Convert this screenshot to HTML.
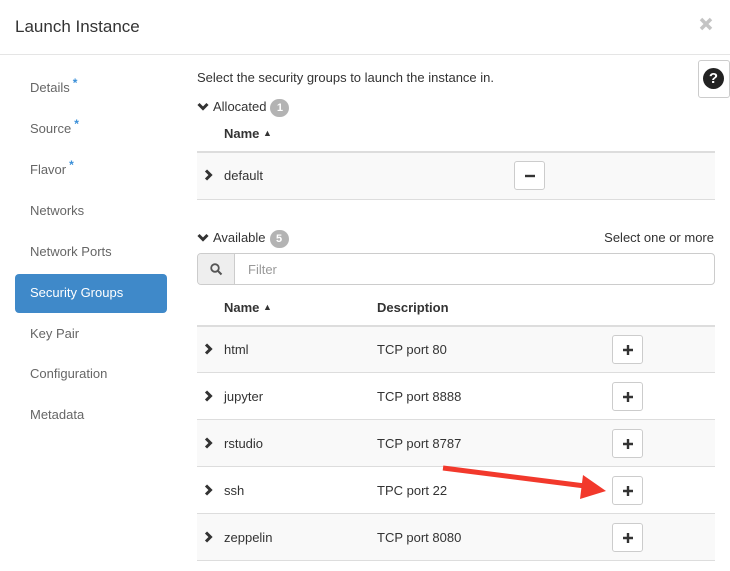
<!DOCTYPE html>
<html><head><style>
*{margin:0;padding:0;box-sizing:border-box}
body{width:730px;height:571px;background:#fff;font-family:"Liberation Sans",sans-serif;font-size:13px;color:#333;position:relative;overflow:hidden}
.a{position:absolute;white-space:nowrap}
.nav{position:absolute;left:30px;color:#666;font-size:13px}
.star{color:#3a8fd8;font-size:12px;position:relative;top:-5px;margin-left:3px;font-weight:bold}
.row{position:absolute;left:197px;width:518px;border-bottom:1px solid #ddd}
.btn{position:absolute;width:31px;height:29px;border:1px solid #ccc;border-radius:3px;background:#fff}
.btn svg{position:absolute;left:10px;top:9px}
.badge{display:inline-block;background:#b3b3b3;color:#fff;border-radius:9px;font-size:11px;font-weight:bold;width:19px;height:18px;line-height:18px;text-align:center;margin-left:4px;vertical-align:0px}
</style></head><body>
<div class="a" style="left:15px;top:17px;font-size:17px;color:#333">Launch Instance</div>
<svg class="a" style="left:699px;top:17px" width="14" height="14"><path d="M2 2 L12 12 M12 2 L2 12" stroke="#c4c4c4" stroke-width="3.5"/></svg>
<div class="a" style="left:0;top:54px;width:730px;height:1px;background:#e5e5e5"></div>

<div class="nav" style="top:80px">Details<span class="star">*</span></div>
<div class="nav" style="top:121px">Source<span class="star">*</span></div>
<div class="nav" style="top:162px">Flavor<span class="star">*</span></div>
<div class="nav" style="top:203px">Networks</div>
<div class="nav" style="top:244px">Network Ports</div>
<div class="a" style="left:15px;top:274px;width:152px;height:39px;background:#3f89c9;border-radius:4px"></div>
<div class="nav" style="top:285px;color:#fff">Security Groups</div>
<div class="nav" style="top:326px">Key Pair</div>
<div class="nav" style="top:366px">Configuration</div>
<div class="nav" style="top:407px">Metadata</div>

<div class="a" style="left:197px;top:70px">Select the security groups to launch the instance in.</div>
<div class="a" style="left:698px;top:60px;width:32px;height:38px;border:1px solid #ccc;border-radius:3px;background:#fff"></div>
<div class="a" style="left:703px;top:68px;width:21px;height:21px;border-radius:50%;background:#222;color:#fff;font-weight:bold;font-size:15px;text-align:center;line-height:21px">?</div>

<svg class="a" style="left:197px;top:102px" width="12" height="9"><path d="M1.5 2 L6 6.5 L10.5 2" stroke="#333" stroke-width="3" fill="none"/></svg>
<div class="a" style="left:213px;top:99px">Allocated<span class="badge">1</span></div>
<div class="a" style="left:224px;top:126px;font-weight:bold">Name <span style="font-size:9px;vertical-align:2px">▲</span></div>
<div class="row" style="top:151px;height:49px;background:#f9f9f9;border-top:2px solid #ddd"></div>
<svg class="a" style="left:204px;top:169px" width="9" height="12"><path d="M2 1.5 L6.5 6 L2 10.5" stroke="#333" stroke-width="3" fill="none"/></svg>
<div class="a" style="left:224px;top:168px">default</div>
<div class="btn" style="left:514px;top:161px"><svg width="10" height="10"><path d="M0 5 H10" stroke="#333" stroke-width="2.4"/></svg></div>

<svg class="a" style="left:197px;top:233px" width="12" height="9"><path d="M1.5 2 L6 6.5 L10.5 2" stroke="#333" stroke-width="3" fill="none"/></svg>
<div class="a" style="left:213px;top:230px">Available<span class="badge">5</span></div>
<div class="a" style="right:16px;top:230px">Select one or more</div>
<div class="a" style="left:197px;top:253px;width:518px;height:32px;border:1px solid #ccc;border-radius:4px;overflow:hidden">
<div style="position:absolute;left:0;top:0;width:37px;height:30px;background:#eee;border-right:1px solid #ccc"></div>
<svg style="position:absolute;left:12px;top:9px" width="13" height="13"><circle cx="5" cy="5" r="3.8" stroke="#555" stroke-width="1.8" fill="none"/><path d="M8 8 L11.5 11.5" stroke="#555" stroke-width="2"/></svg>
<div style="position:absolute;left:50px;top:8px;color:#999">Filter</div>
</div>
<div class="a" style="left:224px;top:300px;font-weight:bold">Name <span style="font-size:9px;vertical-align:2px">▲</span></div>
<div class="a" style="left:377px;top:300px;font-weight:bold">Description</div>

<div class="row" style="top:325px;height:48px;background:#f9f9f9;border-top:2px solid #ddd"></div>
<div class="row" style="top:373px;height:47px;background:#fff"></div>
<div class="row" style="top:420px;height:47px;background:#f9f9f9"></div>
<div class="row" style="top:467px;height:47px;background:#fff"></div>
<div class="row" style="top:514px;height:47px;background:#f9f9f9"></div>

<svg class="a" style="left:204px;top:343px" width="9" height="12"><path d="M2 1.5 L6.5 6 L2 10.5" stroke="#333" stroke-width="3" fill="none"/></svg>
<div class="a" style="left:224px;top:342px">html</div><div class="a" style="left:377px;top:342px">TCP port 80</div>
<div class="btn" style="left:612px;top:335px"><svg width="10" height="10"><path d="M0 5 H10 M5 0 V10" stroke="#333" stroke-width="2.4"/></svg></div>
<svg class="a" style="left:204px;top:390px" width="9" height="12"><path d="M2 1.5 L6.5 6 L2 10.5" stroke="#333" stroke-width="3" fill="none"/></svg>
<div class="a" style="left:224px;top:389px">jupyter</div><div class="a" style="left:377px;top:389px">TCP port 8888</div>
<div class="btn" style="left:612px;top:382px"><svg width="10" height="10"><path d="M0 5 H10 M5 0 V10" stroke="#333" stroke-width="2.4"/></svg></div>
<svg class="a" style="left:204px;top:437px" width="9" height="12"><path d="M2 1.5 L6.5 6 L2 10.5" stroke="#333" stroke-width="3" fill="none"/></svg>
<div class="a" style="left:224px;top:436px">rstudio</div><div class="a" style="left:377px;top:436px">TCP port 8787</div>
<div class="btn" style="left:612px;top:429px"><svg width="10" height="10"><path d="M0 5 H10 M5 0 V10" stroke="#333" stroke-width="2.4"/></svg></div>
<svg class="a" style="left:204px;top:484px" width="9" height="12"><path d="M2 1.5 L6.5 6 L2 10.5" stroke="#333" stroke-width="3" fill="none"/></svg>
<div class="a" style="left:224px;top:483px">ssh</div><div class="a" style="left:377px;top:483px">TPC port 22</div>
<div class="btn" style="left:612px;top:476px"><svg width="10" height="10"><path d="M0 5 H10 M5 0 V10" stroke="#333" stroke-width="2.4"/></svg></div>
<svg class="a" style="left:204px;top:531px" width="9" height="12"><path d="M2 1.5 L6.5 6 L2 10.5" stroke="#333" stroke-width="3" fill="none"/></svg>
<div class="a" style="left:224px;top:530px">zeppelin</div><div class="a" style="left:377px;top:530px">TCP port 8080</div>
<div class="btn" style="left:612px;top:523px"><svg width="10" height="10"><path d="M0 5 H10 M5 0 V10" stroke="#333" stroke-width="2.4"/></svg></div>

<svg class="a" style="left:0;top:0" width="730" height="571"><path d="M443 468 L585 486" stroke="#f2392c" stroke-width="5"/><path d="M606 491 L583 475 L580 499 Z" fill="#f2392c"/></svg>
</body></html>
